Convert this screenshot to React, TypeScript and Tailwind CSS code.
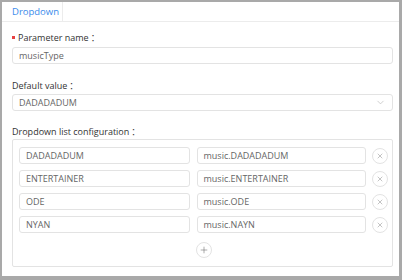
import { ChevronDown, X, Plus } from "lucide-react";

const rows = [
  { label: "DADADADUM", value: "music.DADADADUM" },
  { label: "ENTERTAINER", value: "music.ENTERTAINER" },
  { label: "ODE", value: "music.ODE" },
  { label: "NYAN", value: "music.NAYN" },
];

function Field({ value, className = "" }: { value: string; className?: string }) {
  return (
    <div
      className={`h-[17px] flex items-center border border-[#e3e3e3] rounded-[3px] px-[6px] text-[9px] text-[#666] bg-white ${className}`}
    >
      {value}
    </div>
  );
}

function Label({ children, className = "" }: { children: React.ReactNode; className?: string }) {
  return (
    <div className={`h-[13px] flex items-center text-[9px] text-[#333] ${className}`}>
      {children}
      <span className="ml-[2px]" style={{ fontFamily: '"Noto Sans CJK SC", sans-serif' }}>
        ：
      </span>
    </div>
  );
}

export default function App() {
  return (
    <div
      className="w-[402px] h-[280px] bg-white border-l-2 border-t-2 border-r-[3px] border-b-4 border-[#a9a9a9] flex flex-col"
      style={{ fontFamily: '"Open Sans", "Noto Sans CJK SC", sans-serif' }}
    >
      <div className="h-[20px] flex border-b border-[#ececec] shrink-0">
        <div className="w-[61px] border-r border-[#ececec] flex items-center pl-[10px] pt-[1px] text-[9.5px] text-[#3b8beb]">
          Dropdown
        </div>
      </div>

      <div className="px-[10px] pr-[6px] flex flex-col">
        <Label className="mt-[9px]">
          <span className="w-[3px] h-[3px] bg-[#e84141] mr-[3px]" />
          Parameter name
        </Label>
        <Field value="musicType" className="mt-[3px]" />

        <Label className="mt-[15px]">Default value</Label>
        <div className="mt-[2px] h-[17px] flex items-center justify-between border border-[#e3e3e3] rounded-[3px] px-[6px] text-[9px] text-[#666]">
          DADADADUM
          <ChevronDown className="w-[11px] h-[11px] text-[#bbb]" strokeWidth={1.5} />
        </div>

        <Label className="mt-[14px]">Dropdown list configuration</Label>
        <div className="mt-[1px] h-[128px] border border-[#e3e3e3] rounded-[2px] pl-[6px] pr-[4px] pt-[7px] flex flex-col gap-[6px]">
          {rows.map((r) => (
            <div key={r.label} className="flex items-center">
              <Field value={r.label} className="w-[171px]" />
              <Field value={r.value} className="w-[170px] ml-[7px]" />
              <div className="ml-[6px] w-[16px] h-[16px] rounded-full border border-[#e3e3e3] flex items-center justify-center">
                <X className="w-[8px] h-[8px] text-[#888]" strokeWidth={1.5} />
              </div>
            </div>
          ))}
          <div className="flex justify-center mt-[3px]">
            <div className="w-[16px] h-[16px] rounded-full border border-[#e3e3e3] flex items-center justify-center">
              <Plus className="w-[10px] h-[10px] text-[#666]" strokeWidth={1.3} />
            </div>
          </div>
        </div>
      </div>
    </div>
  );
}
